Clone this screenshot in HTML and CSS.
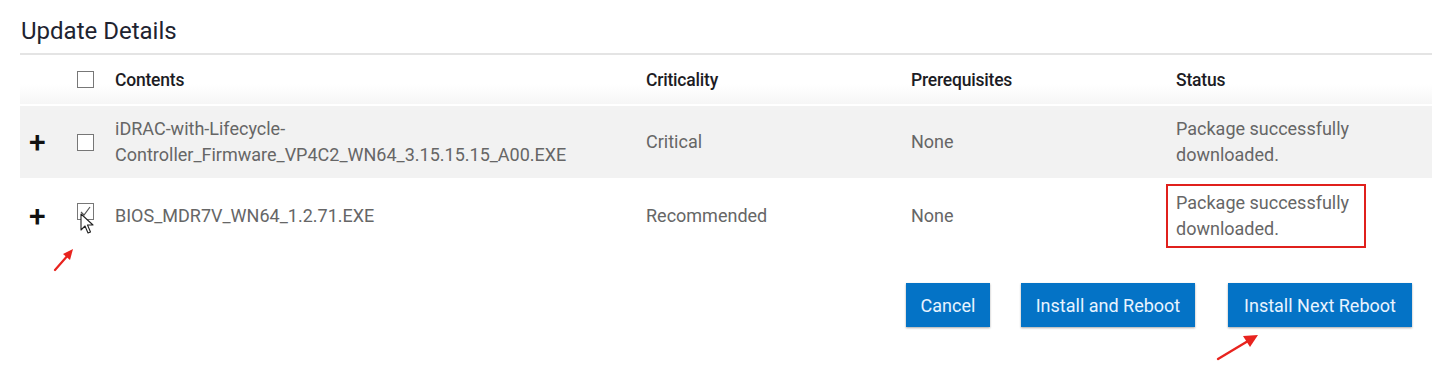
FILE: index.html
```html
<!DOCTYPE html>
<html>
<head>
<meta charset="utf-8">
<link rel="stylesheet" href="styles.css">
</head>
<body>
<div class="panel">
  <h1 class="title">Update Details</h1>
  <div class="table">
    <div class="row head">
      <div class="cell"></div>
      <div class="cell"><span class="cb"></span></div>
      <div class="cell">Contents</div>
      <div class="cell">Criticality</div>
      <div class="cell">Prerequisites</div>
      <div class="cell">Status</div>
    </div>
    <div class="row alt">
      <div class="cell plus">+</div>
      <div class="cell"><span class="cb"></span></div>
      <div class="cell">iDRAC-with-Lifecycle-<br>Controller_Firmware_VP4C2_WN64_3.15.15.15_A00.EXE</div>
      <div class="cell">Critical</div>
      <div class="cell">None</div>
      <div class="cell">Package successfully<br>downloaded.</div>
    </div>
    <div class="row">
      <div class="cell plus">+</div>
      <div class="cell cbcell">
        <span class="cb checked"><svg viewBox="0 0 16 16" width="16" height="16"><path d="M4 9 L7 12 L13 4" fill="none" stroke="#555" stroke-width="1.2"/></svg></span>
        <svg class="cursor" viewBox="0 0 14 22" width="14" height="22"><path d="M1 1 L1 17 L5 13 L8 20 L10.5 19 L7.5 12 L13 12 Z" fill="#fff" stroke="#222" stroke-width="1.1" stroke-linejoin="round"/></svg>
        <svg class="arrow a1" viewBox="0 0 24 24" width="24" height="24"><path d="M2 22 L16 6" stroke="#e8231e" stroke-width="2.2" stroke-linecap="round"/><path d="M20 1 L10 6 L17 12 Z" fill="#e8231e"/></svg>
      </div>
      <div class="cell">BIOS_MDR7V_WN64_1.2.71.EXE</div>
      <div class="cell">Recommended</div>
      <div class="cell">None</div>
      <div class="cell"><span class="hl">Package successfully<br>downloaded.</span></div>
    </div>
  </div>
  <div class="actions">
    <button class="btn b-cancel">Cancel</button>
    <button class="btn b-ir">Install and Reboot</button>
    <button class="btn b-inr">Install Next Reboot
      <svg class="arrow a2" viewBox="0 0 44 28" width="44" height="28"><path d="M2 26 L32 8" stroke="#e8231e" stroke-width="2.4" stroke-linecap="round"/><path d="M42 2 L27 3 L34 14 Z" fill="#e8231e"/></svg>
    </button>
  </div>
</div>
</body>
</html>
```

FILE: styles.css
```css
html, body { margin: 0; padding: 0; background: #fff; }
body { width: 1450px; height: 379px; overflow: hidden; font-family: Roboto, "Liberation Sans", sans-serif; }
.panel { padding: 0 18px 0 20px; }
.title {
  margin: 0;
  padding: 17px 0 0 1px;
  height: 36px;
  font-size: 24px;
  font-weight: 400;
  color: #1e2330;
  border-bottom: 2px solid #e4e4e4;
  line-height: 28px;
}
.table { width: 1412px; }
.row {
  display: grid;
  grid-template-columns: 57px 38px 531px 265px 265px 1fr;
  align-items: center;
  font-size: 18px;
  color: #666;
  line-height: 26px;
  height: 75px;
}
.row.head {
  height: 49px;
  color: #1c1c24;
  font-weight: 500;
  font-size: 17.5px;
  letter-spacing: -0.2px;
  background: linear-gradient(#fff 60%, #f6f6f6);
  margin-bottom: 2px;
}
.row.alt { background: #f2f2f2; height: 72px; }
.cell { position: relative; white-space: nowrap; }
.plus { padding-left: 9px; font-size: 30px; font-weight: 500; color: #111; line-height: 26px; }
.cb {
  display: block;
  width: 15px; height: 15px;
  border: 1px solid #777;
  background: #fff;
  box-sizing: content-box;
}
.cb svg { display: block; margin: -1px 0 0 -1px; }
.cbcell { height: 26px; }
.cursor { position: absolute; left: 3px; top: 10px; }
.arrow { position: absolute; }
.a1 { left: -24px; top: 45px; }
.hl {
  display: inline-block;
  margin-left: -10px;
  padding: 4px 15px 4px 8px;
  border: 2px solid #e0201c;
}
.actions {
  display: flex;
  justify-content: flex-end;
  gap: 31px;
  margin-top: 30px;
  padding-right: 20px;
}
.btn {
  position: relative;
  height: 44px;
  border: none;
  background: #0473c6;
  color: #e8f3ff;
  font-family: Roboto, "Liberation Sans", sans-serif;
  font-size: 18px;
  padding: 0;
  white-space: nowrap;
  box-shadow: 0 1px 2px rgba(0,0,0,0.35);
}
.b-cancel { width: 84px; }
.b-ir { width: 174px; margin-right: 2px; }
.b-inr { width: 184px; }
.a2 { left: -12px; top: 50px; }
```
